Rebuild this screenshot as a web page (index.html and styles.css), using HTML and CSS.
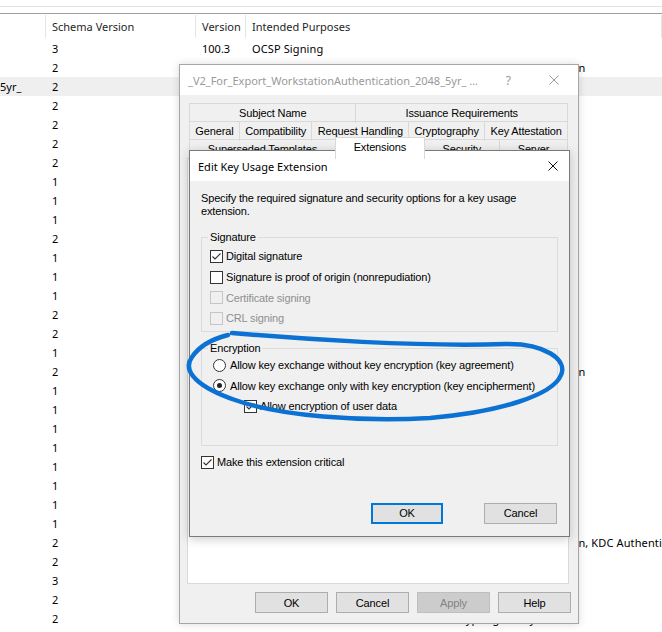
FILE: index.html
```
<!DOCTYPE html>
<html lang="en">
<head>
    <meta charset="UTF-8">
    <meta name="viewport" content="width=device-width, initial-scale=1.0">
    <title>Certificate Templates - Edit Key Usage Extension</title>
    <link rel="stylesheet" href="styles.css">
</head>
<body>
    <!-- certificate templates list behind the dialogs -->
    <div class="console">
        <div class="console-strip"></div>
        <div class="console-strip dark"></div>
        <div class="list-header">
            <div class="col col-name"></div>
            <div class="col col-schema">Schema Version</div>
            <div class="col col-version">Version</div>
            <div class="col col-purpose">Intended Purposes</div>
        </div>
        <div class="list-body">
            <div class="list-row"><div class="col col-name"></div><div class="col col-schema">3</div><div class="col col-version">100.3</div><div class="col col-purpose">OCSP Signing</div></div>
            <div class="list-row"><div class="col col-name"></div><div class="col col-schema">2</div><div class="col col-version">100.4</div><div class="col col-purpose">Smart Card Logon, Server Authentication, Client Authentication</div></div>
            <div class="list-row selected"><div class="col col-name">5yr_</div><div class="col col-schema">2</div><div class="col col-version">100.2</div><div class="col col-purpose">Client Authentication</div></div>
            <div class="list-row"><div class="col col-name"></div><div class="col col-schema">2</div><div class="col col-version">100.2</div><div class="col col-purpose">Server Authentication</div></div>
            <div class="list-row"><div class="col col-name"></div><div class="col col-schema">2</div><div class="col col-version">100.5</div><div class="col col-purpose">Client Authentication</div></div>
            <div class="list-row"><div class="col col-name"></div><div class="col col-schema">2</div><div class="col col-version">100.2</div><div class="col col-purpose">Code Signing</div></div>
            <div class="list-row"><div class="col col-name"></div><div class="col col-schema">2</div><div class="col col-version">100.3</div><div class="col col-purpose">Document Signing</div></div>
            <div class="list-row"><div class="col col-name"></div><div class="col col-schema">1</div><div class="col col-version">4.1</div><div class="col col-purpose">Encrypting File System</div></div>
            <div class="list-row"><div class="col col-name"></div><div class="col col-schema">1</div><div class="col col-version">3.1</div><div class="col col-purpose">Certificate Request Agent</div></div>
            <div class="list-row"><div class="col col-name"></div><div class="col col-schema">1</div><div class="col col-version">5.1</div><div class="col col-purpose">Secure Email</div></div>
            <div class="list-row"><div class="col col-name"></div><div class="col col-schema">2</div><div class="col col-version">110.0</div><div class="col col-purpose">Directory Service Email Replication</div></div>
            <div class="list-row"><div class="col col-name"></div><div class="col col-schema">1</div><div class="col col-version">6.1</div><div class="col col-purpose">File Recovery</div></div>
            <div class="list-row"><div class="col col-name"></div><div class="col col-schema">1</div><div class="col col-version">3.1</div><div class="col col-purpose">IP security IKE intermediate</div></div>
            <div class="list-row"><div class="col col-name"></div><div class="col col-schema">1</div><div class="col col-version">8.1</div><div class="col col-purpose">Microsoft Trust List Signing</div></div>
            <div class="list-row"><div class="col col-name"></div><div class="col col-schema">2</div><div class="col col-version">105.0</div><div class="col col-purpose">Key Recovery Agent</div></div>
            <div class="list-row"><div class="col col-name"></div><div class="col col-schema">2</div><div class="col col-version">101.0</div><div class="col col-purpose">Private Key Archival</div></div>
            <div class="list-row"><div class="col col-name"></div><div class="col col-schema">1</div><div class="col col-version">4.1</div><div class="col col-purpose">Server Authentication</div></div>
            <div class="list-row"><div class="col col-name"></div><div class="col col-schema">2</div><div class="col col-version">100.2</div><div class="col col-purpose">Server Authentication, Smart Card Logon, Client Authentication</div></div>
            <div class="list-row"><div class="col col-name"></div><div class="col col-schema">1</div><div class="col col-version">4.1</div><div class="col col-purpose">Client Authentication</div></div>
            <div class="list-row"><div class="col col-name"></div><div class="col col-schema">1</div><div class="col col-version">5.1</div><div class="col col-purpose">Smart Card Logon</div></div>
            <div class="list-row"><div class="col col-name"></div><div class="col col-schema">1</div><div class="col col-version">3.1</div><div class="col col-purpose">Code Signing</div></div>
            <div class="list-row"><div class="col col-name"></div><div class="col col-schema">1</div><div class="col col-version">4.1</div><div class="col col-purpose">Secure Email</div></div>
            <div class="list-row"><div class="col col-name"></div><div class="col col-schema">1</div><div class="col col-version">5.1</div><div class="col col-purpose">Encrypting File System</div></div>
            <div class="list-row"><div class="col col-name"></div><div class="col col-schema">1</div><div class="col col-version">3.1</div><div class="col col-purpose">Certificate Request Agent</div></div>
            <div class="list-row"><div class="col col-name"></div><div class="col col-schema">1</div><div class="col col-version">6.1</div><div class="col col-purpose">File Recovery</div></div>
            <div class="list-row"><div class="col col-name"></div><div class="col col-schema">1</div><div class="col col-version">4.1</div><div class="col col-purpose">Server Authentication</div></div>
            <div class="list-row"><div class="col col-name"></div><div class="col col-schema">2</div><div class="col col-version">110.0</div><div class="col col-purpose">Smart Card Logon, Client Authentication, Server Authentication, KDC Authentication</div></div>
            <div class="list-row"><div class="col col-name"></div><div class="col col-schema">2</div><div class="col col-version">100.3</div><div class="col col-purpose">Client Authentication</div></div>
            <div class="list-row"><div class="col col-name"></div><div class="col col-schema">3</div><div class="col col-version">100.2</div><div class="col col-purpose">Server Authentication</div></div>
            <div class="list-row"><div class="col col-name"></div><div class="col col-schema">2</div><div class="col col-version">100.4</div><div class="col col-purpose">Document Signing</div></div>
            <div class="list-row"><div class="col col-name"></div><div class="col col-schema">2</div><div class="col col-version">101.0</div><div class="col col-purpose">Client Authentication, Secure Email, Encrypting File System</div></div>
            <div class="list-row"><div class="col col-name"></div><div class="col col-schema">2</div><div class="col col-version">100.2</div><div class="col col-purpose">Server Authentication</div></div>
        </div>
    </div>

    <!-- template properties sheet (inactive) -->
    <div class="props-window">
        <div class="titlebar inactive">
            <span class="title-text">_V2_For_Export_WorkstationAuthentication_2048_5yr_ ...</span>
            <span class="title-help">?</span>
            <svg class="close-icon" viewBox="0 0 10 10"><path d="M0.5 0.5 L9.5 9.5 M9.5 0.5 L0.5 9.5"/></svg>
        </div>
        <div class="props-body">
            <div class="tab-rows">
                <div class="tab-row">
                    <span class="tab">Subject Name</span>
                    <span class="tab">Issuance Requirements</span>
                </div>
                <div class="tab-row">
                    <span class="tab">General</span>
                    <span class="tab">Compatibility</span>
                    <span class="tab">Request Handling</span>
                    <span class="tab">Cryptography</span>
                    <span class="tab">Key Attestation</span>
                </div>
                <div class="tab-row">
                    <span class="tab">Superseded Templates</span>
                    <span class="tab selected">Extensions</span>
                    <span class="tab">Security</span>
                    <span class="tab">Server</span>
                </div>
            </div>
            <div class="tab-panel"></div>
            <div class="button-row">
                <button class="btn">OK</button>
                <button class="btn">Cancel</button>
                <button class="btn" disabled>Apply</button>
                <button class="btn">Help</button>
            </div>
        </div>
    </div>

    <!-- key usage dialog (active) -->
    <div class="edit-dialog">
        <div class="titlebar">
            <span class="title-text">Edit Key Usage Extension</span>
            <svg class="close-icon dark" viewBox="0 0 10 10"><path d="M0.5 0.5 L9.5 9.5 M9.5 0.5 L0.5 9.5"/></svg>
        </div>
        <div class="edit-body">
            <p class="intro">Specify the required signature and security options for a key usage<br>extension.</p>

            <fieldset class="group signature">
                <legend>Signature</legend>
                <div class="option"><span class="check on"><svg viewBox="0 0 11 11"><path d="M1.5 5.5 L4 8 L9.5 2.5"/></svg></span>Digital signature</div>
                <div class="option"><span class="check"></span>Signature is proof of origin (nonrepudiation)</div>
                <div class="option disabled"><span class="check"></span>Certificate signing</div>
                <div class="option disabled"><span class="check"></span>CRL signing</div>
            </fieldset>

            <fieldset class="group encryption">
                <legend>Encryption</legend>
                <div class="option"><span class="radio"></span>Allow key exchange without key encryption (key agreement)</div>
                <div class="option"><span class="radio on"></span>Allow key exchange only with key encryption (key encipherment)</div>
                <div class="option sub"><span class="check on"><svg viewBox="0 0 11 11"><path d="M1.5 5.5 L4 8 L9.5 2.5"/></svg></span>Allow encryption of user data</div>
            </fieldset>

            <div class="option critical"><span class="check on"><svg viewBox="0 0 11 11"><path d="M1.5 5.5 L4 8 L9.5 2.5"/></svg></span>Make this extension critical</div>

            <div class="dialog-buttons">
                <button class="btn default">OK</button>
                <button class="btn">Cancel</button>
            </div>
        </div>
    </div>

    <!-- hand drawn highlight around the encryption box -->
    <svg class="annotation" viewBox="0 0 662 632">
        <path d="M232 333 C300 339, 420 347, 505 344 C545 343, 568 360, 561 375 C553 395, 500 412, 430 418 C360 422, 280 416, 235 400 C200 388, 181 372, 192 357 C200 345, 212 339, 228 335"/>
    </svg>
</body>
</html>
```

FILE: styles.css
```
* {
    box-sizing: border-box;
}

body {
    margin: 0;
    width: 662px;
    height: 632px;
    overflow: hidden;
    position: relative;
    background: #fff;
    font-family: "Noto Sans", "Open Sans", sans-serif;
    font-size: 11px;
    color: #000;
}

/* ---- list view ---- */

.console-strip {
    height: 7px;
    border-bottom: 1px solid #e3e3e3;
}

.console-strip.dark {
    border-bottom-color: #a0a0a0;
}

.list-header {
    display: flex;
    height: 25px;
    color: #1e1e1e;
}

.list-header .col {
    height: 23px;
    margin-top: 1px;
    line-height: 23px;
    border-right: 1px solid #e5e5e5;
}

.list-row {
    display: flex;
    height: 19px;
    line-height: 19px;
}

.list-row.selected {
    background: #efefef;
}

.col {
    white-space: nowrap;
    overflow: hidden;
    flex: none;
}

.col-name {
    width: 46px;
}

.col-schema {
    width: 150px;
    padding-left: 6px;
}

.col-version {
    width: 50px;
    padding-left: 6px;
}

.col-purpose {
    flex: 1;
    padding-left: 6px;
    overflow: visible;
}

.list-row .col-purpose {
    letter-spacing: 0.12px;
}

/* ---- windows ---- */

.titlebar {
    height: 30px;
    background: #fff;
    display: flex;
    align-items: center;
    padding-left: 8px;
    font-size: 11px;
    flex: none;
}

.titlebar.inactive {
    color: #999;
}

.title-help {
    margin-left: auto;
    margin-right: 38px;
    font-size: 12px;
}

.close-icon {
    width: 10px;
    height: 10px;
    fill: none;
    stroke: #999;
    stroke-width: 1;
}

.close-icon.dark {
    stroke: #111;
    margin-left: auto;
    margin-right: 11px;
}

.props-window .close-icon {
    margin-right: 19px;
}

.props-window,
.edit-dialog {
    font-family: "Liberation Sans", Arial, sans-serif;
}

.titlebar .title-text,
.titlebar .title-help {
    font-family: "Noto Sans", "Open Sans", sans-serif;
}

.props-window {
    position: absolute;
    left: 179px;
    top: 64px;
    width: 400px;
    height: 560px;
    border: 1px solid #a6a6a6;
    background: #f0f0f0;
    box-shadow: 0 0 8px rgba(0, 0, 0, 0.15);
    display: flex;
    flex-direction: column;
}

.props-body {
    padding: 8px 9px 0 7px;
    font-size: 11px;
    letter-spacing: -0.15px;
}

.tab-rows {
    margin: 0 1px 0 2px;
}

.tab-row {
    display: flex;
    height: 19px;
}

.tab-row + .tab-row {
    margin-top: -1px;
}

.tab {
    flex: 1 1 auto;
    text-align: center;
    height: 20px;
    line-height: 18px;
    padding: 0 5px;
    border: 1px solid #d9d9d9;
    border-bottom: none;
    margin-left: -1px;
    white-space: nowrap;
}

.tab:first-child {
    margin-left: 0;
}

.tab.selected {
    background: #fff;
    margin-top: -2px;
    height: 22px;
    position: relative;
    z-index: 1;
}

.tab-panel {
    height: 426px;
    background: #fff;
    border: 1px solid #d9d9d9;
}

.button-row {
    display: flex;
    justify-content: flex-end;
    gap: 8px;
    margin-top: 8px;
    margin-right: -2px;
}

.btn {
    width: 73px;
    height: 21px;
    padding: 0;
    background: #e1e1e1;
    border: 1px solid #adadad;
    font-family: "Liberation Sans", Arial, sans-serif;
    font-size: 11px;
    letter-spacing: -0.15px;
    color: #000;
}

.btn:disabled {
    background: #cccccc;
    border-color: #bfbfbf;
    color: #838383;
}

.btn.default {
    width: 72px;
    border: 2px solid #0078d7;
}

/* ---- edit key usage dialog ---- */

.edit-dialog {
    position: absolute;
    left: 189px;
    top: 150px;
    width: 381px;
    height: 387px;
    border: 1px solid #7a7a7a;
    background: #f0f0f0;
    box-shadow: 0 2px 10px rgba(0, 0, 0, 0.2);
    display: flex;
    flex-direction: column;
}

.edit-body {
    padding: 11px 11px 0 11px;
    font-size: 11px;
    letter-spacing: -0.15px;
}

.intro {
    margin: 0;
    line-height: 13px;
}

.group {
    margin: 13px 0 0;
    padding: 2px 8px 2px 8px;
    border: 1px solid #dcdcdc;
}

.group legend {
    padding: 0 2px;
    margin-left: -2px;
    line-height: 13px;
}

.group.encryption {
    margin-top: 10px;
    padding-top: 0;
    padding-bottom: 28px;
}

.option {
    display: flex;
    align-items: center;
    height: 20.7px;
    white-space: nowrap;
}

.option.disabled {
    color: #8f8f8f;
}

.option.sub {
    margin-left: 34px;
}

.option.critical {
    margin-top: 6px;
}

.check {
    flex: none;
    width: 13px;
    height: 13px;
    border: 1px solid #333;
    background: #fff;
    margin-right: 3px;
    display: flex;
}

.check svg {
    width: 11px;
    height: 11px;
    fill: none;
    stroke: #333;
    stroke-width: 1.1;
}

.option.disabled .check {
    border-color: #c6c6c6;
    background: transparent;
}

.radio {
    flex: none;
    width: 13px;
    height: 13px;
    border: 1px solid #333;
    border-radius: 50%;
    background: #fff;
    margin: 0 4px 0 3px;
    display: flex;
    align-items: center;
    justify-content: center;
}

.radio.on::after {
    content: "";
    width: 5px;
    height: 5px;
    border-radius: 50%;
    background: #222;
}

.dialog-buttons {
    display: flex;
    justify-content: flex-end;
    gap: 41px;
    margin-top: 30px;
    margin-right: 1px;
}

/* ---- annotation ---- */

.annotation {
    position: absolute;
    left: 0;
    top: 0;
    width: 662px;
    height: 632px;
    pointer-events: none;
    fill: none;
    stroke: #0b72d4;
    stroke-width: 4.5;
    stroke-linecap: round;
    stroke-linejoin: round;
}
```
